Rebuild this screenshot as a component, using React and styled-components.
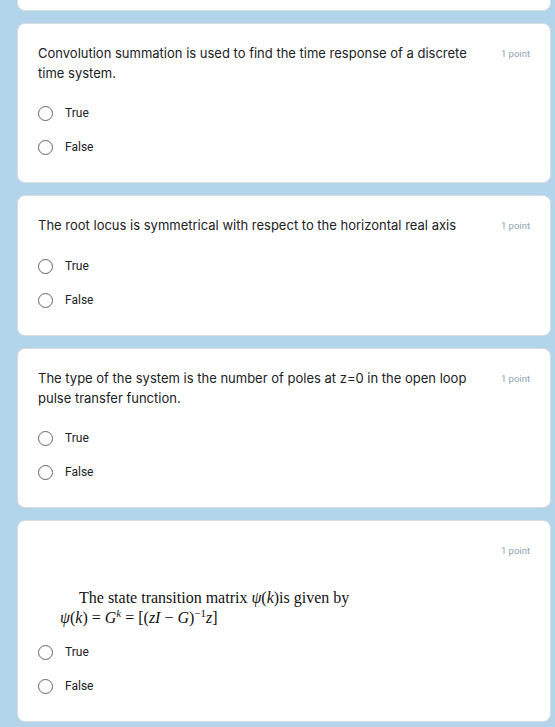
import React from 'react'
import styled, { createGlobalStyle } from 'styled-components'

const GlobalStyle = createGlobalStyle`
  html, body {
    margin: 0;
    padding: 0;
    background: #b3d5ec;
    overflow: hidden;
  }
`

const Page = styled.div`
  display: flex;
  flex-direction: column;
  gap: 12px;
  padding: 0 4px 0 17px;
  margin-top: -30px;
  font-family: Inter, 'Open Sans', sans-serif;
`

const Card = styled.div`
  background: #fff;
  border: 1px solid #dadce0;
  border-radius: 8px;
  padding: 19px 20px 18px 20px;
`

const Header = styled.div`
  display: flex;
  align-items: flex-start;
  justify-content: space-between;
  gap: 20px;
`

const Title = styled.div`
  flex: 1;
  max-width: 440px;
  font-size: 13px;
  line-height: 20px;
  color: #202124;
`

const Points = styled.div`
  font-family: Roboto, sans-serif;
  font-size: 9.5px;
  line-height: 20px;
  color: #8fa2b3;
  white-space: nowrap;
  padding-top: 1px;
`

const Options = styled.div`
  display: flex;
  flex-direction: column;
  margin-top: ${(p) => p.gap || 13}px;
`

const Option = styled.label`
  display: flex;
  align-items: center;
  height: 34px;
  gap: 12px;
  font-family: Roboto, sans-serif;
  font-size: 12px;
  color: #202124;
`

const Radio = styled.span`
  width: 13px;
  height: 13px;
  border: 1.5px solid #5f6368;
  border-radius: 50%;
  flex-shrink: 0;
`

const Formula = styled.div`
  font-family: 'Liberation Serif', 'DejaVu Serif', serif;
  font-size: 16px;
  line-height: 20px;
  color: #111;
  margin-top: 27px;
  padding-left: 22px;
`

const FormulaLine = styled.div`
  padding-left: ${(p) => p.indent || 0}px;
  white-space: nowrap;
`

const I = styled.i`
  font-style: italic;
`

const Sup = styled.sup`
  font-size: 11px;
  line-height: 0;
  vertical-align: 6px;
`

const questions = [
  'Convolution summation is used to find the time response of a discrete time system.',
  'The root locus is symmetrical with respect to the horizontal real axis',
  'The type of the system is the number of poles at z=0 in the open loop pulse transfer function.',
]

const Choices = ({ gap }) => (
  <Options gap={gap}>
    <Option>
      <Radio />
      True
    </Option>
    <Option>
      <Radio />
      False
    </Option>
  </Options>
)

const App = () => (
  <>
    <GlobalStyle />
    <Page>
      <Card style={{ height: 2 }} />
      {questions.map((q) => (
        <Card key={q}>
          <Header>
            <Title>{q}</Title>
            <Points>1 point</Points>
          </Header>
          <Choices />
        </Card>
      ))}
      <Card>
        <Header>
          <Title />
          <Points>1 point</Points>
        </Header>
        <Formula>
          <FormulaLine indent={19}>
            The state transition matrix <I>ψ</I>(<I>k</I>)is given by
          </FormulaLine>
          <FormulaLine>
            <I>ψ</I>(<I>k</I>) = <I>G</I>
            <Sup>
              <I>k</I>
            </Sup>{' '}
            = [(<I>zI</I> − <I>G</I>)<Sup>−1</Sup>
            <I>z</I>]
          </FormulaLine>
        </Formula>
        <Choices gap={7} />
      </Card>
    </Page>
  </>
)

export default App
